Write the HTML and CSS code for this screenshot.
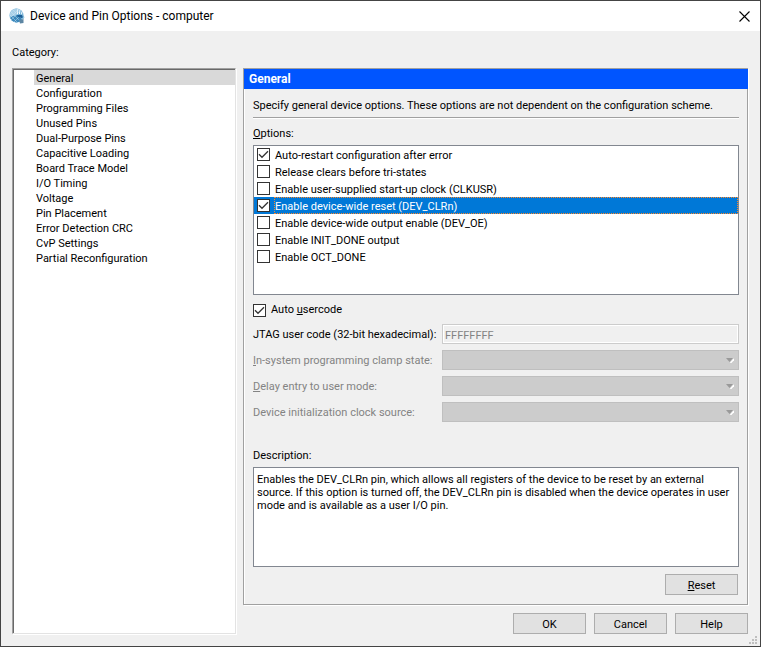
FILE: index.html
```html
<!DOCTYPE html>
<html lang="en">
<head>
<meta charset="utf-8">
<title>Device and Pin Options - computer</title>
<link rel="stylesheet" href="styles.css">
</head>
<body>
<div class="window">
  <header class="titlebar">
    <svg class="app-icon" width="16" height="16" viewBox="0 0 16 16" aria-hidden="true">
      <circle cx="7.5" cy="7.5" r="7" fill="#6fb0d8"/>
      <path d="M1 5 Q3 1 7 .6 L9 1 L7 7 L1 9Z" fill="#a9d0e8"/>
      <path d="M1 9 L9 7 L14 9 Q12 14 7 14.5 Q2 13 1 9Z" fill="#3c88bb"/>
      <path d="M2 4 L11 13 M4 2 L13 11 M1 7 L8 14 M1 10 L9 2 M2 12 L10 4 M5 14 L12 7" stroke="#d8edf8" stroke-width=".4"/>
      <path d="M9 1 L8.5 6 M11 1.5 L10.5 6 M13 3.5 L12.5 6.5" stroke="#fff" stroke-width="1"/>
      <path d="M8 7 H14 L13 10 L9 9Z" fill="#1d5f96"/>
      <path d="M10 12 L14.5 11 V15 L11 15.5Z" fill="#5d86a3"/>
      <path d="M12.5 6 L15 9 L14 11" stroke="#86b9d6" fill="none"/>
    </svg>
    <h1>Device and Pin Options - computer</h1>
    <button class="close" type="button" aria-label="Close">
      <svg width="11" height="11" viewBox="0 0 11 11"><path d="M.5 .5 L10.5 10.5 M10.5 .5 L.5 10.5" stroke="#000" stroke-width="1.1"/></svg>
    </button>
  </header>
  <form class="content">
    <div class="label" id="category">Category:</div>
    <div class="columns">
      <nav class="categories" aria-labelledby="category">
        <a href="#" class="current" aria-current="page">General</a>
        <a href="#">Configuration</a>
        <a href="#">Programming Files</a>
        <a href="#">Unused Pins</a>
        <a href="#">Dual-Purpose Pins</a>
        <a href="#">Capacitive Loading</a>
        <a href="#">Board Trace Model</a>
        <a href="#">I/O Timing</a>
        <a href="#">Voltage</a>
        <a href="#">Pin Placement</a>
        <a href="#">Error Detection CRC</a>
        <a href="#">CvP Settings</a>
        <a href="#">Partial Reconfiguration</a>
      </nav>
      <div class="main">
        <section class="panel">
          <h2>General</h2>
          <div class="panel-body">
            <p class="intro">Specify general device options. These options are not dependent on the configuration scheme.</p>
            <div class="label" id="options"><u>O</u>ptions:</div>
            <div class="options" role="group" aria-labelledby="options">
              <label class="option"><input type="checkbox" checked><span>Auto-restart configuration after error</span></label>
              <label class="option"><input type="checkbox"><span>Release clears before tri-states</span></label>
              <label class="option"><input type="checkbox"><span>Enable user-supplied start-up clock (CLKUSR)</span></label>
              <label class="option selected"><input type="checkbox" checked><span>Enable device-wide reset (DEV_CLRn)</span></label>
              <label class="option"><input type="checkbox"><span>Enable device-wide output enable (DEV_OE)</span></label>
              <label class="option"><input type="checkbox"><span>Enable INIT_DONE output</span></label>
              <label class="option"><input type="checkbox"><span>Enable OCT_DONE</span></label>
            </div>
            <label class="usercode"><input type="checkbox" checked><span>Auto <u>u</u>sercode</span></label>
            <div class="fields">
              <label for="jtag">JTAG user code (32-bit hexadecimal):</label>
              <input id="jtag" type="text" value="FFFFFFFF" disabled>
              <label class="off" for="clamp"><u>I</u>n-system programming clamp state:</label>
              <div class="combo"><select id="clamp" disabled></select><svg width="8" height="5" viewBox="0 0 8 5"><path d="M8 1 L4.5 5" stroke="#fff" stroke-width="1.5"/><path d="M0 0 H7 L3.5 4Z" fill="#999"/></svg></div>
              <label class="off" for="delay"><u>D</u>elay entry to user mode:</label>
              <div class="combo"><select id="delay" disabled></select><svg width="8" height="5" viewBox="0 0 8 5"><path d="M8 1 L4.5 5" stroke="#fff" stroke-width="1.5"/><path d="M0 0 H7 L3.5 4Z" fill="#999"/></svg></div>
              <label class="off" for="clock">Device initialization clock source:</label>
              <div class="combo"><select id="clock" disabled></select><svg width="8" height="5" viewBox="0 0 8 5"><path d="M8 1 L4.5 5" stroke="#fff" stroke-width="1.5"/><path d="M0 0 H7 L3.5 4Z" fill="#999"/></svg></div>
            </div>
            <label class="label" for="description">Description:</label>
            <textarea id="description" readonly>Enables the DEV_CLRn pin, which allows all registers of the device to be reset by an external source. If this option is turned off, the DEV_CLRn pin is disabled when the device operates in user mode and is available as a user I/O pin.</textarea>
            <button class="push reset" type="button"><span><u>R</u>eset</span></button>
          </div>
        </section>
        <div class="actions">
          <button class="push" type="button">OK</button>
          <button class="push" type="button">Cancel</button>
          <button class="push" type="button">Help</button>
        </div>
      </div>
    </div>
  </form>
  <svg class="grip" width="8" height="8" viewBox="0 0 8 8" aria-hidden="true"><path d="M6 0h2v2h-2z M3 3h2v2h-2z M6 3h2v2h-2z M0 6h2v2h-2z M3 6h2v2h-2z M6 6h2v2h-2z" fill="#bfbfbf"/></svg>
</div>
</body>
</html>
```
FILE: styles.css
```css
* { box-sizing: border-box; }

body {
  margin: 0;
  color: #000;
  font: 11px/16px Tahoma, Roboto, sans-serif;
}

h1, h2, p { margin: 0; }
input, button, select, textarea { font: inherit; margin: 0; border-radius: 0; }
u { text-underline-offset: 1px; text-decoration-thickness: 1px; }

.window {
  position: relative;
  display: flex;
  flex-direction: column;
  min-height: 100vh;
  border: 1px solid #444;
  background: #f0f0f0;
}

.titlebar {
  display: flex;
  align-items: center;
  height: 30px;
  padding: 0 10px 0 8px;
  background: #fff;
}
.titlebar h1 {
  flex: 1;
  margin-left: 5px;
  font: 12px/16px "Segoe UI", Roboto, sans-serif;
}
.close {
  display: flex;
  padding: 0;
  border: 0;
  background: none;
}

.content {
  flex: 1;
  display: flex;
  flex-direction: column;
  padding: 14px 12px 12px 11px;
}
.label { display: block; }
.columns {
  flex: 1;
  display: grid;
  grid-template-columns: 224px 1fr;
  gap: 7px;
  margin-top: 7px;
}

.categories {
  padding: 1px 0 0 21px;
  border: 1px solid;
  border-color: #a0a0a0 #e3e3e3 #e3e3e3 #a0a0a0;
  background: #fff;
  box-shadow: 1px 1px #fff, inset 1px 1px #696969;
}
.categories a {
  display: block;
  padding: 2px 0 0 2px;
  color: #000;
  line-height: 13px;
  text-decoration: none;
}
.categories .current { background: #d9d9d9; }

.main { display: flex; flex-direction: column; gap: 8px; }
.panel {
  flex: 1;
  display: flex;
  flex-direction: column;
  border: 1px solid #a0a0a0;
  box-shadow: 1px 1px #fff, inset 1px 1px #fff;
}
.panel h2 {
  margin-right: -1px;
  padding-left: 5px;
  background: #0055ff;
  color: #fff;
  font-size: 12px;
  line-height: 20px;
}
.panel-body {
  flex: 1;
  display: flex;
  flex-direction: column;
  padding: 9px 8px 9px 9px;
}
.intro {
  margin-bottom: 8px;
  padding-bottom: 3px;
  border-bottom: 1px solid #a0a0a0;
  box-shadow: 0 1px #fff;
  white-space: nowrap;
}

.options {
  height: 150px;
  margin-top: 3px;
  border: 1px solid #828790;
  background: #fff;
}
.option {
  display: flex;
  align-items: center;
  height: 17px;
  padding-left: 3px;
}
.option span {
  flex: 1;
  margin-left: 4px;
  padding-top: 2px;
  border: 1px solid transparent;
  line-height: 13px;
}
.selected { background: #0078d7; color: #fff; }
.selected span { border: 1px dotted #ff8728; }

input[type="checkbox"] {
  appearance: none;
  width: 13px;
  height: 13px;
  border: 1px solid #333;
  background: #fff;
}
input[type="checkbox"]:checked {
  background: #fff url("data:image/svg+xml,%3Csvg xmlns='http://www.w3.org/2000/svg' viewBox='0 0 11 11'%3E%3Cpath d='M1 5.3 L4 8.3 L10 2.3' fill='none' stroke='%23333' stroke-width='1.3'/%3E%3C/svg%3E");
}

.usercode {
  display: flex;
  align-items: center;
  gap: 5px;
  margin: 7px 0 6px;
}

.fields {
  display: grid;
  grid-template-columns: 189px 1fr;
  grid-auto-rows: 20px;
  row-gap: 6px;
  align-items: center;
  margin-bottom: 26px;
}
.fields label { padding-top: 2px; white-space: nowrap; }
.off { color: #838383; }
.fields input {
  width: 100%;
  height: 20px;
  padding: 2px 2px 0;
  border: 1px solid #ccc;
  background: #f0f0f0;
  box-shadow: inset 0 0 0 1px #fff;
  color: #838383;
}
.combo { position: relative; height: 20px; }
.combo select {
  appearance: none;
  width: 100%;
  height: 20px;
  border: 1px solid #bfbfbf;
  background: #ccc;
  opacity: 1;
}
.combo svg { position: absolute; right: 5px; top: 8px; }

textarea {
  flex: 1;
  display: block;
  width: 100%;
  min-height: 100px;
  margin: 3px 0 7px;
  padding: 5px 3px;
  border: 1px solid #828790;
  outline: 0;
  background: #fff;
  color: #000;
  line-height: 13px;
  resize: none;
}

.push {
  width: 73px;
  height: 21px;
  padding: 2px 0 0;
  border: 1px solid #adadad;
  background: #e1e1e1;
  color: #000;
}
.reset { align-self: flex-end; margin-right: 1px; }
.actions { display: flex; justify-content: flex-end; gap: 8px; }

.grip { position: absolute; right: 3px; bottom: 2px; }
```
